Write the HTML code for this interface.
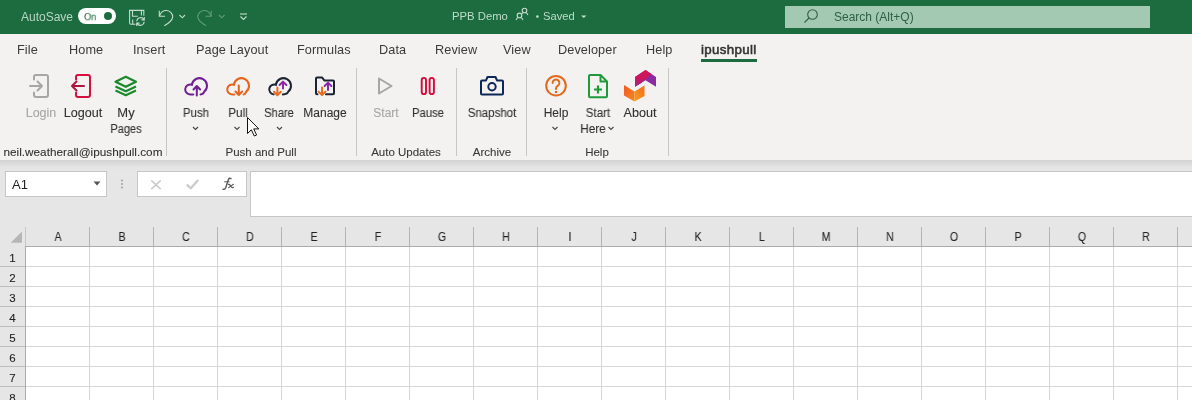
<!DOCTYPE html>
<html><head><meta charset="utf-8">
<style>
html,body{margin:0;padding:0;width:1192px;height:400px;overflow:hidden;background:#fff;}
body{position:relative;font-family:"Liberation Sans",sans-serif;}
.lbl,.grp,.ch,.rh{-webkit-text-stroke:0.1px currentColor;}
.a{will-change:transform;}
.a{position:absolute;white-space:nowrap;}
#title{left:0;top:0;width:1192px;height:34px;background:#1c6c40;}
#tabs{left:0;top:34px;width:1192px;height:126px;background:#f3f2f1;}
.tab{top:42px;font-size:12.7px;color:#3b3a39;line-height:16px;letter-spacing:0.1px;}
.lbl{font-size:12px;color:#323130;line-height:14px;text-align:center;width:100px;}
.dis{color:#a6a6a6;}
.grp{font-size:11.5px;color:#3b3a39;line-height:14px;text-align:center;width:200px;top:145px;}
.sep{width:1px;background:#c8c6c4;top:68px;height:88px;}
#fbar{left:0;top:160px;width:1192px;height:67px;background:#e6e6e6;}
#shadow{left:0;top:160px;width:1192px;height:11px;background:linear-gradient(#d2d2d2,#e3e3e3 60%,#e6e6e6);}
#colhdr{left:0;top:227px;width:1192px;height:19px;background:#e6e6e6;}
.ch{top:229.5px;font-size:12.2px;color:#222;line-height:14px;text-align:center;width:64px;transform:scaleX(0.86);}
.rh{left:0;width:25px;font-size:11.5px;color:#222;line-height:14px;text-align:center;}
</style></head><body>
<!-- title bar -->
<div id="title" class="a"></div>
<div class="a" style="left:21px;top:10px;font-size:12px;line-height:15px;color:#b9d6c3;">AutoSave</div>
<div class="a" style="left:78px;top:8px;width:38px;height:16px;border-radius:8px;background:#fff;"></div>
<div class="a" style="left:84px;top:11px;font-size:10px;line-height:13px;color:#155c36;transform:scale(0.93);transform-origin:0 0">On</div>
<div class="a" style="left:104px;top:12px;width:8px;height:8px;border-radius:4px;background:#1c6c40;"></div>
<svg class="a" style="left:0;top:0" width="600" height="34" viewBox="0 0 600 34">
  <g fill="none" stroke="#c3dccc" stroke-width="1.1">
    <!-- save icon -->
    <path d="M135.5 24.2 H131 Q129.6 24.2 129.6 22.8 V10.4 H143.8 V15.8"/>
    <path d="M132.5 10.4 V16.3 H137.8"/>
    <path d="M141.4 10.4 V15.6"/>
    <path d="M132.7 19.4 V24"/>
    <path d="M136.8 21.2 A3.9 3.9 0 0 1 143.9 19.4 M144.3 17 V19.9 H141.4"/>
    <path d="M144.2 21.8 A3.9 3.9 0 0 1 137.1 23.6 M136.7 26 V23.1 H139.6"/>
    <!-- undo -->
    <path d="M159.3 10.8 V16.3 H165"/>
    <path d="M159.6 16 A6.6 6.6 0 0 1 172.7 17.2 Q172 21.5 164.3 25.8"/>
    <path d="M179.5 15 L182.3 17.8 L185 15"/>
  </g>
  <g fill="none" stroke="#5f9c79" stroke-width="1.1">
    <path d="M211.15 10.8 V16.3 H205.45"/>
    <path d="M210.85 16 A6.6 6.6 0 0 0 197.75 17.2 Q198.45 21.5 206.15 25.8"/>
    <path d="M219 15 L221.8 17.8 L224.5 15"/>
  </g>
  <g fill="none" stroke="#c3dccc" stroke-width="1.1">
    <path d="M240 14 H247"/>
    <path d="M240.5 16.5 L243.5 19.5 L246.5 16.5"/>
    <!-- person -->
    <circle cx="519.5" cy="15.4" r="2.3"/>
    <path d="M517.5 17.8 L516 19.9 M521.5 17.8 L523 19.9"/>
    <circle cx="524.5" cy="10.5" r="2.3"/>
    <path d="M526.5 12.9 L528 15 M522.5 12.9 L521.8 13.9"/>
  </g>
  <circle cx="537.4" cy="16.6" r="1.3" fill="#c3dccc"/>
  <path d="M581 15.5 H586.5 L583.75 18 Z" fill="#c3dccc"/>
</svg>
<div class="a" style="left:452px;top:9px;font-size:11.3px;line-height:15px;color:#bfdcc8;">PPB Demo</div>
<div class="a" style="left:543px;top:9px;font-size:11.2px;line-height:15px;color:#bfdcc8;">Saved</div>
<div class="a" style="left:785px;top:6px;width:365px;height:22px;background:#a3c9b3;"></div>
<svg class="a" style="left:780px;top:0" width="40" height="34" viewBox="780 0 40 34">
  <circle cx="812.5" cy="14.5" r="4.8" fill="none" stroke="#2d5f43" stroke-width="1.1"/>
  <path d="M809 18 L804.5 22.5" stroke="#2d5f43" stroke-width="1.1"/>
</svg>
<div class="a" style="left:834px;top:10px;font-size:12px;line-height:14px;color:#2e6045;">Search (Alt+Q)</div>

<!-- tabs + ribbon -->
<div id="tabs" class="a"></div>
<div class="a tab" style="left:17px">File</div>
<div class="a tab" style="left:69px">Home</div>
<div class="a tab" style="left:133px">Insert</div>
<div class="a tab" style="left:196px">Page Layout</div>
<div class="a tab" style="left:297px">Formulas</div>
<div class="a tab" style="left:379px">Data</div>
<div class="a tab" style="left:435px">Review</div>
<div class="a tab" style="left:503px">View</div>
<div class="a tab" style="left:558px">Developer</div>
<div class="a tab" style="left:646px">Help</div>
<div class="a tab" style="left:701px;color:#333;font-size:13.3px;top:41.5px;-webkit-text-stroke:0.55px #333;letter-spacing:0.35px">ipushpull</div>
<div class="a" style="left:701px;top:59px;width:56px;height:3px;background:#1d6b40;"></div>

<!-- separators -->
<div class="a sep" style="left:166px"></div>
<div class="a sep" style="left:356px"></div>
<div class="a sep" style="left:456px"></div>
<div class="a sep" style="left:526px"></div>
<div class="a sep" style="left:668px"></div>

<!-- labels -->
<div class="a lbl dis" style="left:-9px;top:106px;transform:scaleX(1.04)">Login</div>
<div class="a lbl" style="left:33px;top:106px;transform:scaleX(1.05)">Logout</div>
<div class="a lbl" style="left:76px;top:106px;transform:scaleX(1.08)">My</div>
<div class="a lbl" style="left:76px;top:122px;transform:scaleX(0.92)">Pages</div>
<div class="a grp" style="left:-17px;top:145px;color:#323130;font-size:11.75px">neil.weatherall@ipushpull.com</div>

<div class="a lbl" style="left:146px;top:106px;transform:scaleX(0.95)">Push</div>
<div class="a lbl" style="left:188px;top:106px;transform:scaleX(0.97)">Pull</div>
<div class="a lbl" style="left:229px;top:106px;transform:scaleX(0.93)">Share</div>
<div class="a lbl" style="left:275px;top:106px;transform:scaleX(1.0)">Manage</div>
<div class="a grp" style="left:161px">Push and Pull</div>

<div class="a lbl dis" style="left:336px;top:106px;transform:scaleX(1.0)">Start</div>
<div class="a lbl" style="left:378px;top:106px;transform:scaleX(0.94)">Pause</div>
<div class="a grp" style="left:306px">Auto Updates</div>
<div class="a lbl" style="left:442px;top:106px;transform:scaleX(0.96)">Snapshot</div>
<div class="a grp" style="left:392px">Archive</div>

<div class="a lbl" style="left:506px;top:106px;transform:scaleX(1.0)">Help</div>
<div class="a lbl" style="left:548px;top:106px;transform:scaleX(0.96)">Start</div>
<div class="a lbl" style="left:543px;top:122px;transform:scaleX(0.98)">Here</div>
<div class="a lbl" style="left:590px;top:106px;transform:scaleX(1.05)">About</div>
<div class="a grp" style="left:497px">Help</div>

<svg class="a" style="left:0;top:60px" width="700" height="100" viewBox="0 60 700 100">
  <!-- chevrons -->
  <g fill="none" stroke="#444" stroke-width="1.1">
    <path d="M193 127 L195.5 129.5 L198 127"/>
    <path d="M234.5 127 L237 129.5 L239.5 127"/>
    <path d="M277 127 L279.5 129.5 L282 127"/>
    <path d="M552.5 127 L555 129.5 L557.5 127"/>
    <path d="M608.5 127 L611 129.5 L613.5 127"/>
  </g>
  <!-- login -->
  <g fill="none" stroke="#a6a6a6" stroke-width="2" stroke-linecap="round" stroke-linejoin="round">
    <path d="M34 79.5 V77 Q34 75 36 75 H46 Q48 75 48 77 V95 Q48 97 46 97 H36 Q34 97 34 95 V92.5"/>
    <path d="M30 86 H42 M37.5 81.5 L42 86 L37.5 90.5"/>
  </g>
  <!-- logout -->
  <g fill="none" stroke="#d6103d" stroke-width="2" stroke-linecap="round" stroke-linejoin="round">
    <path d="M76 79.5 V77 Q76 75 78 75 H88 Q90 75 90 77 V95 Q90 97 88 97 H78 Q76 97 76 95 V92.5"/>
    <path d="M84 86 H72.5 M76.5 81.5 L72 86 L76.5 90.5" stroke="#b0153d"/>
  </g>
  <!-- my pages -->
  <g fill="none" stroke="#1b8a2c" stroke-width="2.2" stroke-linejoin="round">
    <path d="M115.5 81.8 L125.8 76.8 L136 81.8 L125.8 86.8 Z"/>
    <path d="M115.5 86.4 L125.8 91.2 L136 86.4"/>
    <path d="M115.5 90.6 L125.8 95.2 L136 90.6"/>
  </g>
  <!-- push -->
  <g transform="translate(184 77)" fill="none" stroke="#701e94" stroke-width="2" stroke-linecap="round">
    <path d="M9.3 17.4 H6.15 A4.95 4.95 0 1 1 7.87 7.81 A7.6 7.6 0 1 1 20.3 14.6 Q19.5 17.4 16.5 17.4"/>
    <path d="M12.8 18.5 V9.5 M9.5 12.5 L12.8 9 L16.1 12.5" stroke-linejoin="round"/>
  </g>
  <!-- pull -->
  <g transform="translate(226 77)" fill="none" stroke="#e5631c" stroke-width="2" stroke-linecap="round">
    <path d="M8.3 17.4 H6.15 A4.95 4.95 0 1 1 7.87 7.81 A7.6 7.6 0 1 1 20.3 14.6 Q19.5 17.4 17.6 17.4"/>
    <path d="M12.8 8.5 V17.5 M9.5 14.5 L12.8 18 L16.1 14.5" stroke-linejoin="round"/>
  </g>
  <!-- share -->
  <g transform="translate(268 77)" fill="none" stroke="#1c2333" stroke-width="2" stroke-linecap="round">
    <path d="M5.6 17.38 A4.95 4.95 0 1 1 7.87 7.81 A7.6 7.6 0 1 1 20.3 14.6 Q19.5 17.4 14.8 17.4"/>
    <path d="M9.4 10.5 V17.8 M6 14.8 L9.4 18.2 L12.8 14.8" stroke="#ea6a1e" stroke-linejoin="round"/>
    <path d="M15 11.5 V4.8 M11.6 8 L15 4.6 L18.4 8" stroke="#8a2aa8" stroke-linejoin="round"/>
  </g>
  <!-- manage -->
  <g fill="none" stroke="#1c2333" stroke-width="2" stroke-linecap="round" stroke-linejoin="round">
    <path d="M317.5 94.2 H317 Q316 94.2 316 93.2 V78.5 Q316 77.4 317 77.4 H322 L324.5 80.6 H333 Q334 80.6 334 81.6 V93.2 Q334 94.2 333 94.2 H326"/>
    <path d="M322 87.5 V94.8 M318.6 91.6 L322 95 L325.4 91.6" stroke="#ea6a1e"/>
    <path d="M328 90 V82.8 M324.6 86 L328 82.6 L331.4 86" stroke="#8a2aa8"/>
  </g>
  <!-- start -->
  <path d="M379 78.5 L391.5 86 L379 93.5 Z" fill="none" stroke="#a6a6a6" stroke-width="2" stroke-linejoin="round"/>
  <!-- pause -->
  <g fill="none" stroke="#d4083a" stroke-width="1.9">
    <rect x="421.7" y="77.9" width="4.3" height="16.2" rx="2.15"/>
    <rect x="429.6" y="77.9" width="4.3" height="16.2" rx="2.15"/>
  </g>
  <!-- camera -->
  <g fill="none" stroke="#0c2857" stroke-width="2" stroke-linejoin="round">
    <path d="M482 80.4 H486 L487.5 77 H495.5 L497 80.4 H502 Q503 80.4 503 81.4 V93.6 Q503 94.6 502 94.6 H482 Q481 94.6 481 93.6 V81.4 Q481 80.4 482 80.4 Z"/>
    <circle cx="492" cy="86.8" r="3.7"/>
  </g>
  <!-- help -->
  <g fill="none" stroke="#e26a1e" stroke-width="2" stroke-linecap="round">
    <circle cx="556" cy="85.7" r="9.8"/>
    <path d="M552.6 83 A3.4 3.4 0 1 1 558.3 85.4 Q556 86.6 556 88.4 V89"/>
  </g>
  <circle cx="556" cy="91.9" r="1.25" fill="#e26a1e"/>
  <!-- start here -->
  <g fill="none" stroke="#1f9a3a" stroke-width="2" stroke-linejoin="round">
    <path d="M590 75 H600.5 L607 81.5 V96 Q607 97.2 606 97.2 H590 Q589 97.2 589 96 V76 Q589 75 590 75 Z"/>
    <path d="M600.5 75 V81.5 H607"/>
    <path d="M594 89.5 H602 M598 85.5 V93.5" stroke-width="2.2"/>
  </g>
  <!-- about logo -->
  <defs>
    <linearGradient id="gu" x1="0" y1="0" x2="0" y2="1"><stop offset="0" stop-color="#d8125a"/><stop offset="0.55" stop-color="#c8175f"/><stop offset="1" stop-color="#9a2590"/></linearGradient>
    <linearGradient id="gl" x1="0" y1="0" x2="1" y2="1"><stop offset="0" stop-color="#ee5a24"/><stop offset="1" stop-color="#f7881f"/></linearGradient>
    <linearGradient id="gr" x1="0" y1="1" x2="1" y2="0"><stop offset="0" stop-color="#f9a01b"/><stop offset="1" stop-color="#f26b21"/></linearGradient>
  </defs>
  <polygon points="635,77 645.5,70 656,77 656,86.8 645.5,80.3 635,86.8" fill="#8b2ba3"/>
  <polygon points="635,77 645.5,70 651.5,74 640.5,83.4 635,86.8" fill="url(#gu)"/>
  <polygon points="624,85 634.5,91.5 634.5,101.5 624,95.5" fill="url(#gl)"/>
  <polygon points="634.5,91.5 644.5,85.5 644.5,96 634.5,101.5" fill="url(#gr)"/>
  <!-- cursor -->
  <path d="M247.5 117.5 V133.5 L251.3 129.8 L254.3 136 L256.6 135 L253.7 128.9 L258.8 128.9 Z" fill="#fff" stroke="#111" stroke-width="1" stroke-linejoin="round"/>
</svg>

<!-- formula bar area -->
<div id="fbar" class="a"></div>
<div id="shadow" class="a"></div>
<div class="a" style="left:5px;top:171px;width:100px;height:24px;background:#fff;border:1px solid #c6c6c6;"></div>
<div class="a" style="left:12px;top:178px;font-size:13px;line-height:14px;color:#222">A1</div>
<div class="a" style="left:137px;top:171px;width:108px;height:24px;background:#fff;border:1px solid #c6c6c6;"></div>
<div class="a" style="left:250px;top:171px;width:950px;height:44px;background:#fff;border:1px solid #c6c6c6;"></div>
<svg class="a" style="left:0;top:165px" width="260" height="40" viewBox="0 165 260 40">
  <path d="M93.5 181.5 H100.5 L97 185.5 Z" fill="#555"/>
  <circle cx="122" cy="180.5" r="0.9" fill="#9a9a9a"/>
  <circle cx="122" cy="184" r="0.9" fill="#9a9a9a"/>
  <circle cx="122" cy="187.5" r="0.9" fill="#9a9a9a"/>
  <path d="M151.3 180.3 L160.7 189.2 M160.7 180.3 L151.3 189.2" stroke="#cbcbcb" stroke-width="1.6"/>
  <path d="M186.8 184.6 L190.8 188.3 L198.2 180" fill="none" stroke="#cbcbcb" stroke-width="2.3" stroke-linejoin="round"/>
</svg>
<svg class="a" style="left:215px;top:170px" width="30" height="26" viewBox="215 170 30 26"><g fill="none" stroke="#595959" stroke-linecap="round">
<path d="M231 178.6 Q229.4 177.4 228.4 179.6 L225.7 187.8 Q224.9 189.9 222.9 189.2" stroke-width="1.4"/>
<path d="M224.6 181.7 H229.1" stroke-width="1.1"/>
<path d="M228.4 184.4 Q229.6 184 230.3 185.4 L231.3 186.9 Q232.1 187.9 233.4 187.3" stroke-width="1.2"/>
<path d="M233.4 184.3 L228.6 187.6" stroke-width="1.1"/>
</g></svg>

<!-- grid -->

<div id="colhdr" class="a"></div>
<div class="a" style="left:0;top:246px;width:1192px;height:1px;background:#ababab"></div>
<div class="a" style="left:0;top:227px;width:25px;height:173px;background:#e6e6e6"></div>
<div class="a" style="left:25px;top:227px;width:1px;height:19px;background:#c6c6c6"></div><div class="a" style="left:25px;top:246px;width:1px;height:154px;background:#ababab"></div>
<svg class="a" style="left:0;top:227px" width="1192" height="173" viewBox="0 227 1192 173">
  <path d="M10.7 242.7 L22 242.7 L22 231.4 Z" fill="#b6b6b6"/>
  <g stroke="#b4b4b4" stroke-width="1">
    <path d="M89.5 227 V246 M153.5 227 V246 M217.5 227 V246 M281.5 227 V246 M345.5 227 V246 M409.5 227 V246 M473.5 227 V246 M537.5 227 V246 M601.5 227 V246 M665.5 227 V246 M729.5 227 V246 M793.5 227 V246 M857.5 227 V246 M921.5 227 V246 M985.5 227 V246 M1049.5 227 V246 M1113.5 227 V246 M1177.5 227 V246"/>
  </g>
  <g stroke="#d6d6d6" stroke-width="1">
    <path d="M89.5 247 V400 M153.5 247 V400 M217.5 247 V400 M281.5 247 V400 M345.5 247 V400 M409.5 247 V400 M473.5 247 V400 M537.5 247 V400 M601.5 247 V400 M665.5 247 V400 M729.5 247 V400 M793.5 247 V400 M857.5 247 V400 M921.5 247 V400 M985.5 247 V400 M1049.5 247 V400 M1113.5 247 V400 M1177.5 247 V400"/>
    <path d="M26 266.5 H1192 M26 286.5 H1192 M26 306.5 H1192 M26 326.5 H1192 M26 346.5 H1192 M26 366.5 H1192 M26 386.5 H1192"/>
  </g>
  <g stroke="#bdbdbd" stroke-width="1">
    <path d="M0 266.5 H25 M0 286.5 H25 M0 306.5 H25 M0 326.5 H25 M0 346.5 H25 M0 366.5 H25 M0 386.5 H25"/>
  </g>
</svg>
<div class="a ch" style="left:26px">A</div>
<div class="a ch" style="left:90px">B</div>
<div class="a ch" style="left:154px">C</div>
<div class="a ch" style="left:218px">D</div>
<div class="a ch" style="left:282px">E</div>
<div class="a ch" style="left:346px">F</div>
<div class="a ch" style="left:410px">G</div>
<div class="a ch" style="left:474px">H</div>
<div class="a ch" style="left:538px">I</div>
<div class="a ch" style="left:602px">J</div>
<div class="a ch" style="left:666px">K</div>
<div class="a ch" style="left:730px">L</div>
<div class="a ch" style="left:794px">M</div>
<div class="a ch" style="left:858px">N</div>
<div class="a ch" style="left:922px">O</div>
<div class="a ch" style="left:986px">P</div>
<div class="a ch" style="left:1050px">Q</div>
<div class="a ch" style="left:1114px">R</div>
<div class="a rh" style="top:251px">1</div>
<div class="a rh" style="top:271px">2</div>
<div class="a rh" style="top:291px">3</div>
<div class="a rh" style="top:311px">4</div>
<div class="a rh" style="top:331px">5</div>
<div class="a rh" style="top:351px">6</div>
<div class="a rh" style="top:371px">7</div>
<div class="a rh" style="top:391px">8</div>
</body></html>
